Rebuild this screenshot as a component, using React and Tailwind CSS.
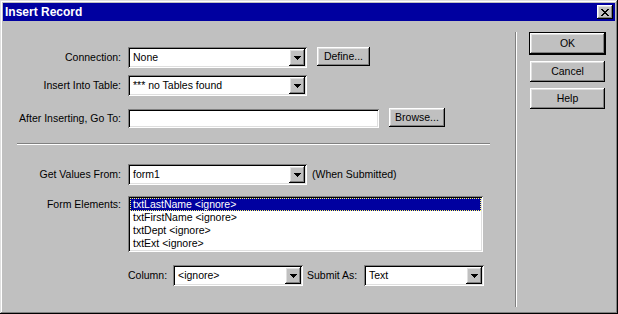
const raised = 'shadow-[inset_-1px_-1px_#000,inset_1px_1px_#fff,inset_-2px_-2px_#808080,inset_2px_2px_#dfdfdf]'
const sunken = 'shadow-[inset_1px_1px_#808080,inset_-1px_-1px_#fff,inset_2px_2px_#000,inset_-2px_-2px_#dfdfdf]'

// classic 8x7 close glyph, one rect per pixel
const closePixels = [
  [0, 0], [1, 0], [6, 0], [7, 0],
  [1, 1], [2, 1], [5, 1], [6, 1],
  [2, 2], [3, 2], [4, 2], [5, 2],
  [3, 3], [4, 3],
  [2, 4], [3, 4], [4, 4], [5, 4],
  [1, 5], [2, 5], [5, 5], [6, 5],
  [0, 6], [1, 6], [6, 6], [7, 6],
]

function CloseGlyph() {
  return (
    <svg width="8" height="7" viewBox="0 0 8 7" shapeRendering="crispEdges">
      {closePixels.map(([x, y]) => (
        <rect key={`${x}-${y}`} x={x} y={y} width="1" height="1" fill="#000" />
      ))}
    </svg>
  )
}

function Arrow() {
  return (
    <svg width="7" height="4" viewBox="0 0 7 4" shapeRendering="crispEdges">
      <rect x="0" y="0" width="7" height="1" fill="#000" />
      <rect x="1" y="1" width="5" height="1" fill="#000" />
      <rect x="2" y="2" width="3" height="1" fill="#000" />
      <rect x="3" y="3" width="1" height="1" fill="#000" />
    </svg>
  )
}

function Select({ value, className }) {
  return (
    <div className={`h-[21px] bg-white p-[2px] flex shrink-0 ${sunken} ${className}`}>
      <div className="flex-1 flex items-center pl-[3px] whitespace-nowrap overflow-hidden">{value}</div>
      <div className={`w-[16px] h-[17px] bg-[#c0c0c0] flex items-center justify-center ${raised}`}>
        <Arrow />
      </div>
    </div>
  )
}

function Button({ children, className }) {
  return (
    <div className={`bg-[#c0c0c0] flex items-center justify-center shrink-0 ${raised} ${className}`}>
      {children}
    </div>
  )
}

function Label({ children, className = '' }) {
  return <div className={`w-[118px] mr-[7px] text-right whitespace-nowrap shrink-0 ${className}`}>{children}</div>
}

const elements = ['txtLastName <ignore>', 'txtFirstName <ignore>', 'txtDept <ignore>', 'txtExt <ignore>']

export default function App() {
  return (
    <div className="w-[618px] h-[314px] bg-[#c0c0c0] p-[3px] flex flex-col text-[10.5px] text-black font-['Liberation_Sans',Arial,sans-serif] shadow-[inset_-1px_-1px_#000,inset_1px_1px_#dfdfdf,inset_-2px_-2px_#808080,inset_2px_2px_#fff]">
      <div className="h-[18px] bg-[#0000a0] flex items-center justify-between pl-[2px] pr-[2px] shrink-0">
        <span className="text-white font-bold text-[12px] leading-none">Insert Record</span>
        <div className={`w-[16px] h-[14px] bg-[#c0c0c0] flex items-center justify-center ${raised}`}>
          <CloseGlyph />
        </div>
      </div>

      <div className="flex flex-1">
        <div className="w-[512px] flex flex-col">
          <div className="mt-[26px] flex items-center">
            <Label>Connection:</Label>
            <Select value="None" className="w-[179px]" />
            <Button className="ml-[10px] self-start w-[53px] h-[19px]">Define...</Button>
          </div>

          <div className="mt-[7px] flex items-center">
            <Label>Insert Into Table:</Label>
            <Select value="*** no Tables found" className="w-[179px]" />
          </div>

          <div className="mt-[12px] h-[20px] flex items-start">
            <Label className="mt-[3px]">After Inserting, Go To:</Label>
            <div className={`mt-[1px] w-[251px] h-[19px] bg-white ${sunken}`} />
            <Button className="ml-[10px] w-[56px] h-[19px]">Browse...</Button>
          </div>

          <div className="mt-[15px] ml-[14px] w-[473px] h-[2px] border-t border-t-[#808080] border-b border-b-white" />

          <div className="mt-[19px] flex items-center">
            <Label>Get Values From:</Label>
            <Select value="form1" className="w-[179px]" />
            <span className="ml-[5px]">(When Submitted)</span>
          </div>

          <div className="mt-[11px] flex items-start">
            <Label className="pt-[2px] leading-[13px]">Form Elements:</Label>
            <div className={`w-[355px] h-[56px] bg-white p-[2px] flex flex-col ${sunken}`}>
              {elements.map((el, i) => (
                <div
                  key={el}
                  className={`h-[13px] leading-[13px] pl-[3px] whitespace-nowrap ${i === 0 ? 'bg-[#0000a0] text-white outline-1 outline-dotted outline-[#ffff60] -outline-offset-1' : ''}`}
                >
                  {el}
                </div>
              ))}
            </div>
          </div>

          <div className="mt-[13px] ml-[125px] flex items-center">
            <span className="w-[45px] shrink-0 whitespace-nowrap">Column:</span>
            <Select value="<ignore>" className="w-[130px]" />
            <span className="ml-[4px] w-[57px] shrink-0 whitespace-nowrap">Submit As:</span>
            <Select value="Text" className="w-[120px]" />
          </div>
        </div>

        <div className="mt-[11px] mb-[4px] w-[2px] border-l border-l-[#808080] border-r border-r-white" />

        <div className="ml-[12px] pt-[11px] flex flex-col">
          <div className="w-[77px] h-[23px] border border-black">
            <Button className="w-full h-full">OK</Button>
          </div>
          <Button className="mt-[6px] ml-[1px] w-[75px] h-[21px]">Cancel</Button>
          <Button className="mt-[6px] ml-[1px] w-[75px] h-[21px]">Help</Button>
        </div>
      </div>
    </div>
  )
}
